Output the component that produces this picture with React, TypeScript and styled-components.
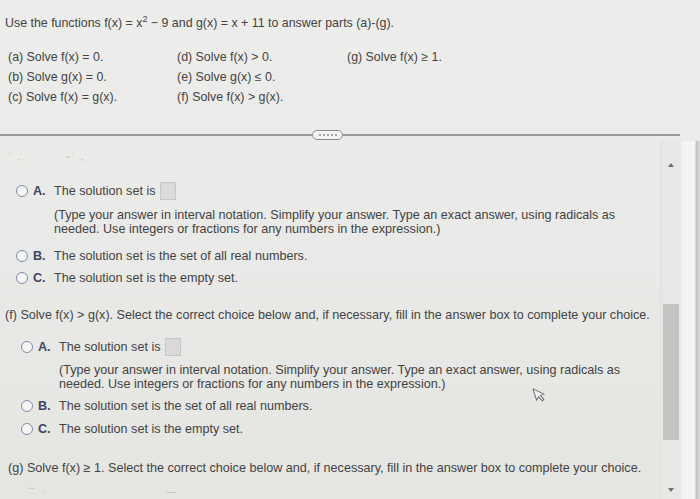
import React from 'react';
import styled, { createGlobalStyle } from 'styled-components';

const GlobalStyle = createGlobalStyle`
  html, body {
    margin: 0;
    padding: 0;
  }
  body {
    background: #e8e8e6;
    font-family: "Liberation Sans", Arial, sans-serif;
    color: #434343;
  }
`;

const Page = styled.div`
  width: 700px;
  height: 499px;
  overflow: hidden;
  display: flex;
  flex-direction: column;
  background: linear-gradient(180deg, #ededeb 0%, #e9e9e7 55%, #e5e5e2 100%);
  font-size: 12.6px;
`;

const Header = styled.div`
  padding: 14px 0 0 5px;
`;

const Title = styled.div`
  font-size: 12.4px;
  line-height: 18px;
`;

const Sup = styled.sup`
  font-size: 9px;
  line-height: 0;
  vertical-align: 5px;
`;

const PartsGrid = styled.div`
  display: grid;
  grid-template-columns: 169px 170px 1fr;
  margin: 15px 0 0 3px;
  line-height: 20px;
  font-size: 12.4px;
`;

const DividerRow = styled.div`
  display: flex;
  align-items: center;
  width: 680px;
  height: 12px;
  margin-top: 22px;
`;

const Line = styled.div<{ $width?: number }>`
  height: 1.5px;
  background: #9a9a9a;
  ${p => (p.$width ? `width: ${p.$width}px;` : 'flex: 1;')}
`;

const Pill = styled.div`
  width: 29px;
  height: 8px;
  border: 1.5px solid #8c8c8c;
  border-radius: 6px;
  background: #f3f3f3;
  display: flex;
  align-items: center;
  justify-content: center;
  gap: 2px;
`;

const Dot = styled.span`
  width: 2px;
  height: 2px;
  border-radius: 50%;
  background: #8a8a8a;
`;

const Lower = styled.div`
  flex: 1;
  display: flex;
  min-height: 0;
`;

const Content = styled.div`
  flex: 1;
  position: relative;
  padding-top: 8px;
  overflow: hidden;
`;

const Fragments = styled.div<{ $top?: number }>`
  display: flex;
  height: 16px;
  align-items: center;
  margin-top: ${p => p.$top ?? 0}px;
  color: #b4b4b4;
  font-size: 9px;
  letter-spacing: 2px;
`;

const Fragment = styled.span<{ $left: number }>`
  margin-left: ${p => p.$left}px;
`;

const Section = styled.div<{ $indent: number }>`
  padding-left: ${p => p.$indent}px;
`;

const Option = styled.div<{ $gap: number }>`
  display: flex;
  align-items: center;
  min-height: 18px;
  margin-top: ${p => p.$gap}px;
`;

const Radio = styled.span`
  width: 10px;
  height: 10px;
  border-radius: 50%;
  border: 1.2px solid #7d8ca5;
  background: #f6f6f6;
  margin-right: 5px;
  flex-shrink: 0;
`;

const Letter = styled.span`
  width: 21px;
  font-weight: bold;
  color: #3e4463;
`;

const AnswerBox = styled.span`
  display: inline-block;
  width: 14px;
  height: 16px;
  margin-left: 4px;
  background: #dadada;
  border: 1px solid #c6c6c6;
`;

const Note = styled.div<{ $gap: number }>`
  padding-left: 38px;
  margin-top: ${p => p.$gap}px;
  line-height: 14px;
`;

const NoteLine = styled.span`
  display: block;
  white-space: nowrap;
`;

const Heading = styled.div<{ $indent: number; $gap: number }>`
  padding-left: ${p => p.$indent}px;
  margin-top: ${p => p.$gap}px;
  line-height: 18px;
  white-space: nowrap;
`;

const Cursor = styled.svg`
  position: absolute;
  left: 534px;
  top: 245px;
  transform: rotate(-18deg);
`;

const Track = styled.div`
  width: 20px;
  display: flex;
  flex-direction: column;
  align-items: center;
  background: #e7e7e6;
  border-left: 1px solid #e0e0de;
`;

const Arrow = styled.span<{ $down?: boolean }>`
  width: 0;
  height: 0;
  border-left: 3px solid transparent;
  border-right: 3px solid transparent;
  ${p =>
    p.$down
      ? 'border-top: 4px solid #6f6f6f; margin-bottom: 7px;'
      : 'border-bottom: 4px solid #6f6f6f; margin-top: 22px;'}
`;

const Thumb = styled.div`
  width: 16px;
  height: 136px;
  margin-top: 137px;
  background: #c4c4c3;
`;

const Spacer = styled.div`
  flex: 1;
`;

const Edge = styled.div`
  width: 19px;
  background: linear-gradient(90deg, #f2f2f1 0%, #f5f5f4 70%, #c2c2c1 82%, #d9d9d8 100%);
`;

const note = [
  '(Type your answer in interval notation. Simplify your answer. Type an exact answer, using radicals as',
  'needed. Use integers or fractions for any numbers in the expression.)',
];

interface ChoicesProps {
  indent: number;
  gaps: [number, number, number, number];
}

const Choices: React.FC<ChoicesProps> = ({ indent, gaps }) => (
  <Section $indent={indent}>
    <Option $gap={gaps[0]}>
      <Radio />
      <Letter>A.</Letter>
      The solution set is
      <AnswerBox />
    </Option>
    <Note $gap={gaps[1]}>
      {note.map(l => (
        <NoteLine key={l}>{l}</NoteLine>
      ))}
    </Note>
    <Option $gap={gaps[2]}>
      <Radio />
      <Letter>B.</Letter>
      The solution set is the set of all real numbers.
    </Option>
    <Option $gap={gaps[3]}>
      <Radio />
      <Letter>C.</Letter>
      The solution set is the empty set.
    </Option>
  </Section>
);

export default function App() {
  return (
    <Page>
      <GlobalStyle />
      <Header>
        <Title>
          Use the functions f(x) = x<Sup>2</Sup> − 9 and g(x) = x + 11 to answer parts (a)-(g).
        </Title>
        <PartsGrid>
          <span>(a) Solve f(x) = 0.</span>
          <span>(d) Solve f(x) &gt; 0.</span>
          <span>(g) Solve f(x) ≥ 1.</span>
          <span>(b) Solve g(x) = 0.</span>
          <span>(e) Solve g(x) ≤ 0.</span>
          <span />
          <span>(c) Solve f(x) = g(x).</span>
          <span>(f) Solve f(x) &gt; g(x).</span>
          <span />
        </PartsGrid>
      </Header>
      <DividerRow>
        <Line $width={312} />
        <Pill>
          <Dot />
          <Dot />
          <Dot />
          <Dot />
          <Dot />
        </Pill>
        <Line />
      </DividerRow>
      <Lower>
        <Content>
          <Fragments>
            <Fragment $left={8}>˙ ,</Fragment>
            <Fragment $left={44}>ᵕ˙ ,</Fragment>
          </Fragments>
          <Choices indent={16} gaps={[17, 8, 11, 4]} />
          <Heading $indent={5} $gap={19}>
            (f) Solve f(x) &gt; g(x). Select the correct choice below and, if necessary, fill in the answer box to complete your choice.
          </Heading>
          <Choices indent={21} gaps={[14, 7, 6, 5]} />
          <Heading $indent={8} $gap={21}>
            (g) Solve f(x) ≥ 1. Select the correct choice below and, if necessary, fill in the answer box to complete your choice.
          </Heading>
          <Fragments $top={7}>
            <Fragment $left={26}>⌒ ·</Fragment>
            <Fragment $left={120}>—</Fragment>
          </Fragments>
          <Cursor width="12" height="17" viewBox="0 0 12 17">
            <path
              d="M1 1 L1 13 L4 10.2 L6.2 15.3 L8.2 14.4 L6 9.4 L10 9.4 Z"
              fill="#f2f2f2"
              stroke="#6a6a6a"
              strokeWidth="1"
              strokeLinejoin="round"
            />
          </Cursor>
        </Content>
        <Track>
          <Arrow />
          <Thumb />
          <Spacer />
          <Arrow $down />
        </Track>
        <Edge />
      </Lower>
    </Page>
  );
}
